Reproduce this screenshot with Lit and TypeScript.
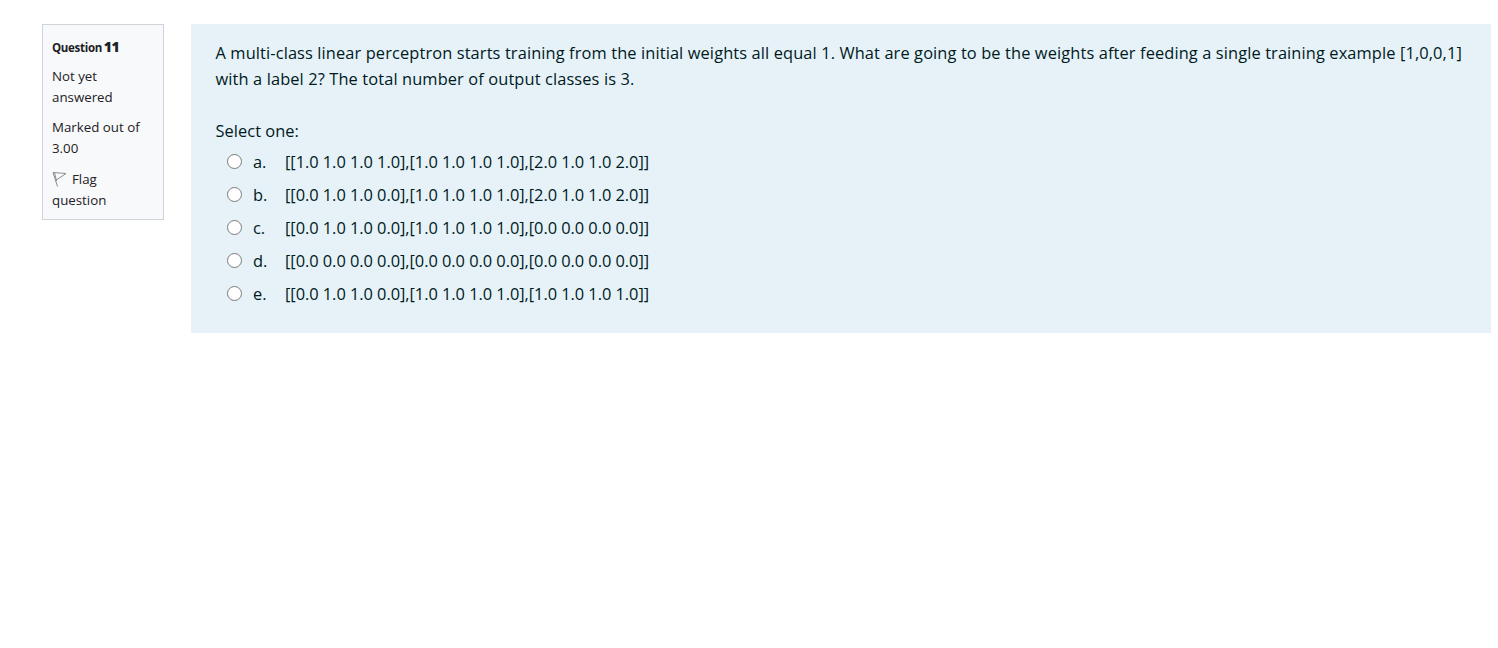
import { LitElement, html, css } from 'lit';
import { customElement } from 'lit/decorators.js';

const ANSWERS = [
  ['a.', '[[1.0 1.0 1.0 1.0],[1.0 1.0 1.0 1.0],[2.0 1.0 1.0 2.0]]'],
  ['b.', '[[0.0 1.0 1.0 0.0],[1.0 1.0 1.0 1.0],[2.0 1.0 1.0 2.0]]'],
  ['c.', '[[0.0 1.0 1.0 0.0],[1.0 1.0 1.0 1.0],[0.0 0.0 0.0 0.0]]'],
  ['d.', '[[0.0 0.0 0.0 0.0],[0.0 0.0 0.0 0.0],[0.0 0.0 0.0 0.0]]'],
  ['e.', '[[0.0 1.0 1.0 0.0],[1.0 1.0 1.0 1.0],[1.0 1.0 1.0 1.0]]'],
];

@customElement('app-root')
export class AppRoot extends LitElement {
  static styles = css`
    :host {
      display: block;
      height: 648px;
      background: #fff;
      font-family: 'Open Sans', 'Noto Sans', sans-serif;
      color: #1d2125;
    }
    .question {
      display: flex;
      align-items: flex-start;
      gap: 27px;
      padding: 24px 7px 0 42px;
    }
    .info {
      box-sizing: border-box;
      flex: 0 0 122px;
      height: 196px;
      padding: 11px 9px 0;
      background: #f8f9fa;
      border: 1px solid #ced4da;
      font-size: 13.3px;
      line-height: 21px;
    }
    .info p { margin: 0 0 9px; }
    .info p.flagged { margin-top: 10px; }
    .title {
      font-weight: 700;
      font-size: 11.5px;
      line-height: 21px;
      margin-bottom: 8px;
      letter-spacing: -0.3px;
    }
    .title b { font-size: 14px; margin-left: -1px; }
    .flag { width: 14px; height: 15px; vertical-align: -3px; margin-right: 6px; }
    .content {
      box-sizing: border-box;
      flex: 1;
      height: 309px;
      padding: 16px 24px 0 24.5px;
      background: #e6f2f7;
      color: #001a1e;
      font-size: 16.4px;
      line-height: 26px;
    }
    .text { margin: 0 0 26px; letter-spacing: 0.115px; }
    .prompt { line-height: 26px; margin-bottom: 1px; letter-spacing: 0.05px; }
    .answer {
      display: flex;
      align-items: center;
      height: 33px;
      padding-left: 11.5px;
      letter-spacing: -0.04px;
    }
    input {
      appearance: none;
      box-sizing: border-box;
      width: 15px;
      height: 15px;
      margin: 0 11px 0 0;
      background: #fff;
      border: 1.5px solid #7a7a7a;
      border-radius: 50%;
    }
    .letter { width: 32px; }
  `;

  render() {
    return html`
      <div class="question">
        <div class="info">
          <div class="title">Question <b>11</b></div>
          <p>Not yet answered</p>
          <p>Marked out of 3.00</p>
          <p class="flagged">
            <svg class="flag" viewBox="0 0 14 15" fill="none" stroke="#8a8d90" stroke-width="1">
              <path d="M1 .5L5.5 14.5M2.5 .5L4.5 9M1 .5L14 1.5L3.5 8.5" />
            </svg>Flag question
          </p>
        </div>
        <div class="content">
          <p class="text">
            A multi-class linear perceptron starts training from the initial weights all equal 1. What are going to be
            the weights after feeding a single training example [1,0,0,1] with a label 2? The total number of output
            classes is 3.
          </p>
          <div class="prompt">Select one:</div>
          ${ANSWERS.map(
            ([letter, value]) => html`
              <label class="answer">
                <input type="radio" name="q11" />
                <span class="letter">${letter}</span>
                <span>${value}</span>
              </label>
            `,
          )}
        </div>
      </div>
    `;
  }
}
